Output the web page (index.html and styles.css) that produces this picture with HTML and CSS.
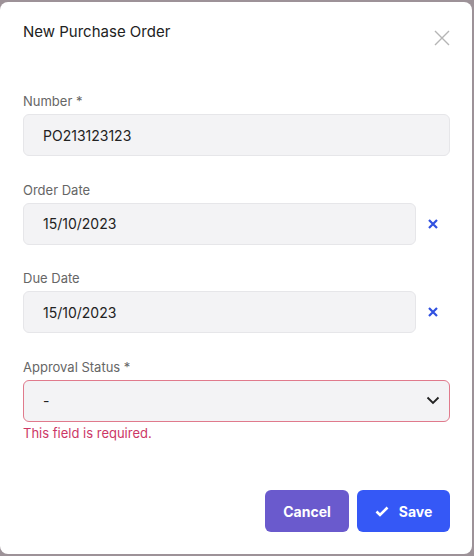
FILE: index.html
```html
<!DOCTYPE html>
<html>
<head>
  <meta charset="utf-8">
  <link rel="stylesheet" href="styles.css">
</head>
<body>
  <div class="modal">
    <div class="modal-header">
      <h1>New Purchase Order</h1>
      <span class="close-btn">
        <svg width="16" height="16" viewBox="0 0 16 16"><path d="M1 1 L15 15 M15 1 L1 15" stroke="#b5b5b5" stroke-width="1.4" fill="none"/></svg>
      </span>
    </div>

    <div class="field">
      <label>Number *</label>
      <div class="input">PO213123123</div>
    </div>

    <div class="field">
      <label>Order Date</label>
      <div class="row">
        <div class="input">15/10/2023</div>
        <span class="clear-btn">
          <svg width="10" height="10" viewBox="0 0 10 10"><path d="M1 1 L9 9 M9 1 L1 9" stroke="#3050e0" stroke-width="2.2" fill="none"/></svg>
        </span>
      </div>
    </div>

    <div class="field">
      <label>Due Date</label>
      <div class="row">
        <div class="input">15/10/2023</div>
        <span class="clear-btn">
          <svg width="10" height="10" viewBox="0 0 10 10"><path d="M1 1 L9 9 M9 1 L1 9" stroke="#3050e0" stroke-width="2.2" fill="none"/></svg>
        </span>
      </div>
    </div>

    <div class="field last">
      <label>Approval Status *</label>
      <div class="input select invalid">
        <span>-</span>
        <svg width="14" height="9" viewBox="0 0 14 9"><path d="M1.5 1.5 L7 7 L12.5 1.5" stroke="#222" stroke-width="1.8" fill="none"/></svg>
      </div>
      <div class="error">This field is required.</div>
    </div>

    <div class="actions">
      <button class="btn cancel">Cancel</button>
      <button class="btn save">
        <svg width="14" height="11" viewBox="0 0 14 11"><path d="M1.5 5.5 L5 9 L12.5 1.5" stroke="#fff" stroke-width="2.6" fill="none"/></svg>
        Save
      </button>
    </div>
  </div>
</body>
</html>
```

FILE: styles.css
```css
body {
  margin: 0;
  background: #9d9298;
  font-family: Inter, "Noto Sans", sans-serif;
}
.modal {
  margin: 2px 2px 2px 0;
  height: 552px;
  box-sizing: border-box;
  background: #fff;
  border-radius: 8px;
  padding: 20px 22px 22px 23px;
  display: flex;
  flex-direction: column;
}
.modal-header {
  display: flex;
  justify-content: space-between;
  align-items: flex-start;
  margin-bottom: 46px;
}
h1 {
  margin: 0;
  font-size: 15px;
  font-weight: 400;
  line-height: 20px;
  color: #222;
}
.close-btn {
  margin-top: 8px;
  width: 16px;
  height: 16px;
}
.field {
  margin-bottom: 24.5px;
}
.field.last {
  margin-bottom: 0;
}
label {
  display: block;
  font-size: 13px;
  line-height: 18px;
  color: #666;
  margin-bottom: 4px;
}
.input {
  height: 42px;
  box-sizing: border-box;
  background: #f3f3f5;
  border: 1px solid #e6e6e9;
  border-radius: 6px;
  padding: 0 19px;
  display: flex;
  align-items: center;
  font-size: 14px;
  color: #222;
}
.row {
  display: flex;
  align-items: center;
}
.row .input {
  flex: 1;
}
.clear-btn {
  width: 34px;
  display: flex;
  justify-content: center;
}
.select {
  justify-content: space-between;
  padding-right: 9px;
}
.invalid {
  border-color: #e07a8c;
}
.error {
  margin-top: 2px;
  font-size: 13px;
  line-height: 18px;
  color: #cc3766;
}
.actions {
  margin-top: auto;
  display: flex;
  justify-content: flex-end;
  gap: 8px;
}
.btn {
  height: 42px;
  border: none;
  border-radius: 6px;
  color: #fff;
  font-family: Inter, sans-serif;
  font-size: 14px;
  font-weight: 700;
  display: flex;
  align-items: center;
  justify-content: center;
  gap: 10px;
}
.cancel {
  width: 84px;
  background: #6a5acd;
}
.save {
  width: 93px;
  background: #3558f6;
}
```
